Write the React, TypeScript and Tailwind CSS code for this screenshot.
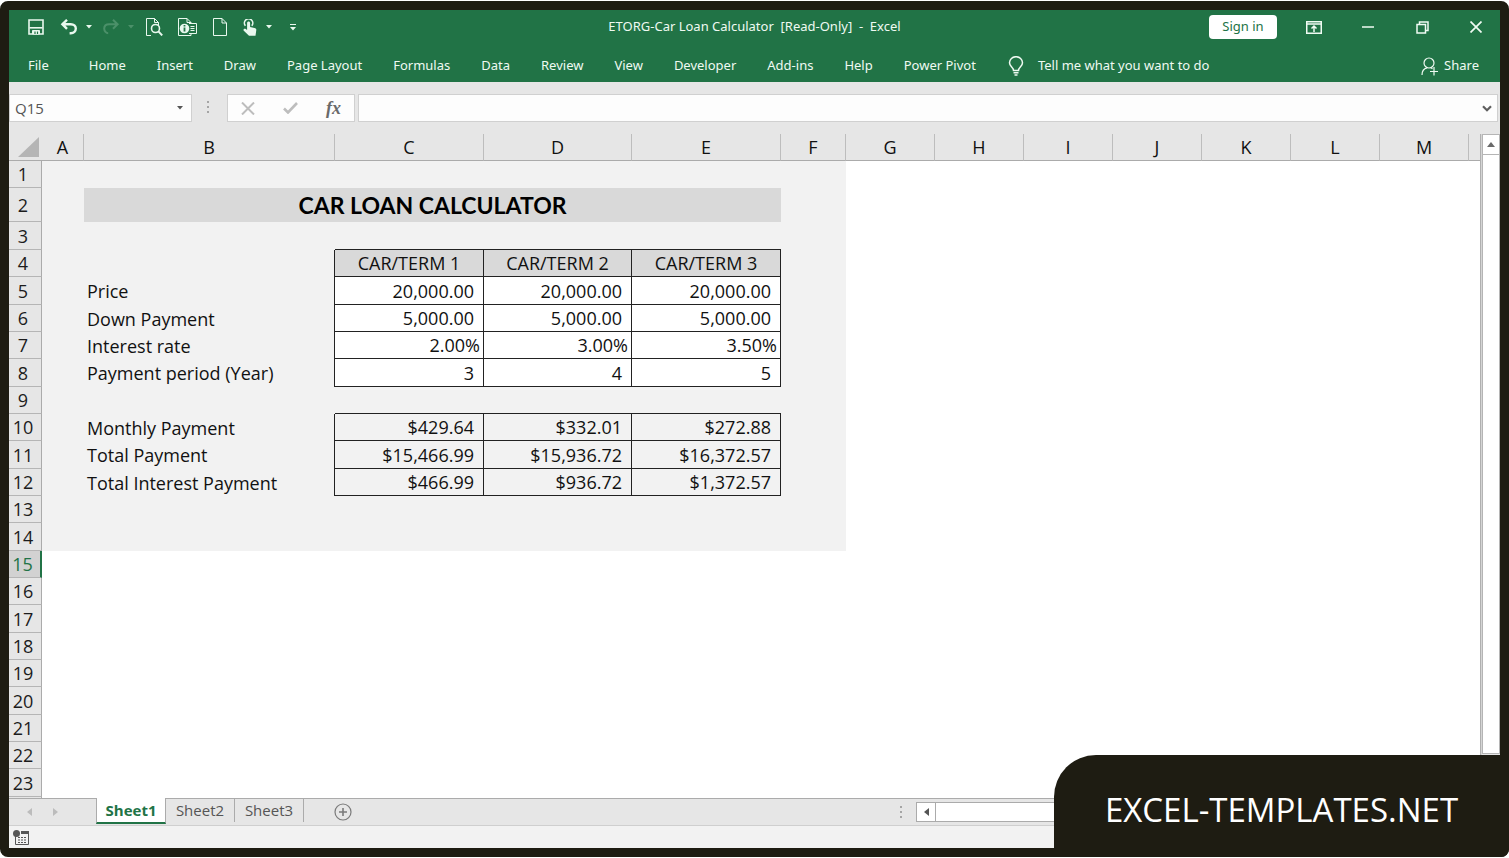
import { useState } from "react";
import type { ReactNode } from "react";

const tabs = ["Home", "Insert", "Draw", "Page Layout", "Formulas", "Data", "Review", "View", "Developer", "Add-ins", "Help", "Power Pivot"];

const columns = ["A", "B", "C", "D", "E", "F", "G", "H", "I", "J", "K", "L", "M"];

const columnWidths = [
  "w-[42px]", "w-[251px]", "w-[149px]", "w-[148px]", "w-[149px]", "w-[65px]",
  "w-[89px]", "w-[89px]", "w-[89px]", "w-[89px]", "w-[89px]", "w-[89px]", "w-[89px]",
];

type LoanRow = { label: string; values: string[]; kind: "head" | "input" | "percent" | "result" };

const loanRows: Record<number, LoanRow> = {
  4: { label: "", values: ["CAR/TERM 1", "CAR/TERM 2", "CAR/TERM 3"], kind: "head" },
  5: { label: "Price", values: ["20,000.00", "20,000.00", "20,000.00"], kind: "input" },
  6: { label: "Down Payment", values: ["5,000.00", "5,000.00", "5,000.00"], kind: "input" },
  7: { label: "Interest rate", values: ["2.00%", "3.00%", "3.50%"], kind: "percent" },
  8: { label: "Payment period (Year)", values: ["3", "4", "5"], kind: "input" },
  10: { label: "Monthly Payment", values: ["$429.64", "$332.01", "$272.88"], kind: "result" },
  11: { label: "Total Payment", values: ["$15,466.99", "$15,936.72", "$16,372.57"], kind: "result" },
  12: { label: "Total Interest Payment", values: ["$466.99", "$936.72", "$1,372.57"], kind: "result" },
};

const kindClass = {
  head: "bg-[#d9d9d9] text-center",
  input: "bg-white text-right pr-[9px]",
  percent: "bg-white text-right pr-[3px]",
  result: "bg-[#f2f2f2] text-right pr-[9px]",
};

function Caret() {
  return (
    <svg width="6" height="4" viewBox="0 0 6 4" fill="currentColor">
      <path d="M0 0h6L3 3.5z" />
    </svg>
  );
}

function IconButton({ label, children, className = "" }: { label: string; children: ReactNode; className?: string }) {
  return (
    <button aria-label={label} title={label} className={`flex shrink-0 items-center justify-center ${className}`}>
      {children}
    </button>
  );
}

function QuickAccess() {
  return (
    <div className="flex items-center pl-[19px] text-[#e9f8ee]">
      <IconButton label="Save" className="w-4">
        <svg width="16" height="16" viewBox="0 0 16 16" fill="none" stroke="currentColor" strokeWidth="1.6">
          <path d="M1 1h14v14H1z" />
          <path d="M1.5 8.800h13" />
          <path d="M4.500 15v-3.500h7V15z" fill="currentColor" strokeWidth="1" />
          <path d="M7 12.500v2.500M9.500 12.500v2.500" stroke="#217346" strokeWidth="1.200" />
        </svg>
      </IconButton>
      <IconButton label="Undo" className="ml-4 w-[18px]">
        <svg width="18" height="16" viewBox="0 0 18 16" fill="none" stroke="currentColor" strokeWidth="2.4">
          <path d="M7 0.8L2.4 5.2 7 9.8M2.6 5.2h8.2c3 0 5 1.8 5 4.4s-2 4.6-5 4.6H9.6" />
        </svg>
      </IconButton>
      <IconButton label="Undo list" className="ml-[7px] w-2"><Caret /></IconButton>
      <IconButton label="Redo" className="ml-[9px] w-[18px] text-[#4b9069]">
        <svg width="18" height="16" viewBox="0 0 18 16" fill="none" stroke="currentColor" strokeWidth="2">
          <path d="M11 0.8l4.6 4.4L11 9.8M15.4 5.2H7.2c-3 0-5 1.8-5 4.4s2 4.6 4 4.6" />
        </svg>
      </IconButton>
      <IconButton label="Redo list" className="ml-[7px] w-2 text-[#4b9069]"><Caret /></IconButton>
      <IconButton label="Print preview" className="ml-[10px] w-[18px]">
        <svg width="18" height="18" viewBox="0 0 18 18" fill="none" stroke="currentColor">
          <path d="M6 17.5H1.5v-17h8l4 4V7M9.5 0.5v4h4" />
          <circle cx="10.5" cy="10.5" r="4" strokeWidth="1.6" />
          <path d="M13.4 13.4l3.8 4" strokeWidth="2" />
        </svg>
      </IconButton>
      <IconButton label="Document info" className="ml-[14px] w-5">
        <svg width="20" height="18" viewBox="0 0 20 18" fill="none" stroke="currentColor">
          <path d="M14 5.5v-1l-4-4H1.5v17H14v-2M10 0.5v4h4M12 5.5h7.5v10H12" />
          <circle cx="7.5" cy="10.5" r="4.8" fill="currentColor" stroke="none" />
          <path d="M7.5 7v1.6M7.5 9.6v4" stroke="#217346" strokeWidth="1.8" />
          <path d="M13.5 8.5h4M13.5 10.5h4M13.5 12.5h4" />
        </svg>
      </IconButton>
      <IconButton label="New" className="ml-4 w-[14px]">
        <svg width="14" height="18" viewBox="0 0 14 18" fill="none" stroke="currentColor">
          <path d="M0.5 0.5h8.5l4.5 4.5v12.5H0.5zM9 0.5V5h4.5" />
        </svg>
      </IconButton>
      <IconButton label="Touch/Mouse mode" className="ml-4 w-[14px]">
        <svg width="14" height="17" viewBox="0 0 14 17" fill="currentColor">
          <path d="M4.1 4c0-2 3-2 3 0v4l4.400.9c1.400.3 2 1 1.800 2.200L12.500 16.800H6L.8 11.800c-1-1.400.7-2.800 2-1.700l1.300 1z" />
          <path d="M2.400 6.800a4.200 4.200 0 1 1 6.400 0" fill="none" stroke="currentColor" strokeWidth="1.600" />
        </svg>
      </IconButton>
      <IconButton label="Input mode list" className="ml-2 w-2"><Caret /></IconButton>
      <IconButton label="Customize" className="ml-4 w-2">
        <svg width="6" height="7" viewBox="0 0 6 7" fill="currentColor">
          <path d="M0 0h6v1H0zM0 3h6L3 6.500z" />
        </svg>
      </IconButton>
    </div>
  );
}

function WindowButtons() {
  return (
    <div className="flex items-center justify-end pr-4 text-[#f0fbf3]">
      <button className="mr-[29px] h-6 w-[68px] rounded-sm bg-white text-[#217346]">Sign in</button>
      <div className="flex items-center gap-[38px]">
        <IconButton label="Ribbon display options" className="w-4">
          <svg width="16" height="13" viewBox="0 0 16 13" fill="none" stroke="currentColor" strokeWidth="1.5">
            <path d="M.75.750h14.500v11.500H.750zM1 3h14M8 11V5.500M5.500 7.500L8 5l2.500 2.500" />
          </svg>
        </IconButton>
        <IconButton label="Minimize" className="w-4">
          <svg width="12" height="2" viewBox="0 0 12 2"><path d="M0 1h12" stroke="currentColor" strokeWidth="1.5" /></svg>
        </IconButton>
        <IconButton label="Restore" className="w-4">
          <svg width="13" height="13" viewBox="0 0 13 13" fill="none" stroke="currentColor" strokeWidth="1.5">
            <path d="M1 3.500h8.500V12H1zM3.500 3V1H12v8.500H10" />
          </svg>
        </IconButton>
        <IconButton label="Close" className="w-4">
          <svg width="12" height="12" viewBox="0 0 12 12" stroke="currentColor" strokeWidth="1.7">
            <path d="M.5.500l11 11M11.500.500l-11 11" />
          </svg>
        </IconButton>
      </div>
    </div>
  );
}

function Ribbon() {
  return (
    <header className="shrink-0 bg-[#217346] font-['Noto_Sans'] text-[13px] text-[#effaf2]">
      <div className="grid h-[34px] grid-cols-[1fr_auto_1fr] items-center">
        <QuickAccess />
        <h1 className="whitespace-pre">ETORG-Car Loan Calculator  [Read-Only]  -  Excel</h1>
        <WindowButtons />
      </div>
      <nav className="flex h-[38px] items-center whitespace-nowrap pl-[19px] pt-[6px]">
        <button className="mr-10">File</button>
        <div className="flex gap-[31px]">
          {tabs.map((tab) => (
            <button key={tab}>{tab}</button>
          ))}
        </div>
        <button className="ml-8 flex items-center gap-[14px]">
          <svg width="16" height="20" viewBox="0 0 16 20" fill="none" stroke="currentColor" strokeWidth="1.5">
            <path d="M5.500 14.500c0-3-4-4-4-7.800a6.500 6 0 0 1 13 0c0 3.800-4 4.800-4 7.800zM5.500 16.800h5M6.500 19h3" />
          </svg>
          Tell me what you want to do
        </button>
        <button className="ml-auto mr-[21px] flex items-center gap-[6px]">
          <svg width="17" height="19" viewBox="0 0 17 19" fill="none" stroke="currentColor" strokeWidth="1.2">
            <circle cx="8" cy="6" r="5" />
            <path d="M1 18c0-4 2-6.500 5-7.200M10 10.800l1.500 1M13 10v8.500M9 14.500h8" />
          </svg>
          Share
        </button>
      </nav>
    </header>
  );
}

function FormulaBar() {
  return (
    <div className="flex h-[52px] shrink-0 items-center pr-[2px]">
      <div className="flex h-7 w-[183px] items-center border border-[#d0d0d0] bg-[#fdfdfd] pr-2 text-[#555]">
        <input aria-label="Name box" defaultValue="Q15" className="w-full min-w-0 bg-transparent pl-[5px] text-[15px] outline-none" />
        <IconButton label="Open name list"><Caret /></IconButton>
      </div>
      <svg width="3" height="14" viewBox="0 0 3 14" fill="#a5a5a5" className="mx-[15px]">
        <path d="M0 0h2v2H0zM0 5h2v2H0zM0 10h2v2H0z" />
      </svg>
      <div className="ml-[2px] flex h-7 w-[128px] shrink-0 items-center justify-between border border-[#d0d0d0] bg-[#fdfdfd] px-[13px]">
        <IconButton label="Cancel">
          <svg width="14" height="13" viewBox="0 0 14 13" stroke="#bdbdbd" strokeWidth="2"><path d="M1 .500l12 12M13 .500l-12 12" /></svg>
        </IconButton>
        <IconButton label="Enter">
          <svg width="15" height="12" viewBox="0 0 15 12" fill="none" stroke="#bdbdbd" strokeWidth="2.6"><path d="M1 6.500l4 4L14 1" /></svg>
        </IconButton>
        <button aria-label="Insert function" className="font-['Liberation_Serif'] text-lg leading-5 font-bold text-[#6a6a6a] italic">fx</button>
      </div>
      <div className="ml-[3px] flex h-7 flex-1 items-center border border-[#d0d0d0] bg-[#fdfdfd] pr-[5px]">
        <input aria-label="Formula" className="h-full w-full bg-transparent px-2 outline-none" />
        <IconButton label="Expand formula bar">
          <svg width="10" height="7" viewBox="0 0 10 7" fill="none" stroke="#5f5f5f" strokeWidth="2.2"><path d="M1 1.200l4 4 4-4" /></svg>
        </IconButton>
      </div>
    </div>
  );
}

function SheetRow({ n }: { n: number }) {
  const row = loanRows[n];
  const height = n === 2 ? "h-[34px]" : n === 3 || n % 3 === 2 ? "h-7" : "h-[27px]";
  const fill = n <= 14 ? "bg-[#f2f2f2]" : "bg-white";
  // cells above a table draw its top line
  const line = row || loanRows[n + 1] ? "border-b border-[#222]" : "";

  return (
    <tr className={height}>
      <th
        scope="row"
        className={`border-b border-r border-b-[#b5b5b5] pr-1 text-center font-normal ${
          n === 15 ? "border-r-2 border-r-[#217346] bg-[#d2d2d2] text-[#217346]" : "border-r-[#ababab] text-[#1c1c1c]"
        }`}
      >
        {n}
      </th>
      <td className={fill}></td>
      {n === 2 ? (
        <td colSpan={4} className="bg-[#d9d9d9] text-center font-['Lato'] text-[23px] font-bold text-black">
          CAR LOAN CALCULATOR
        </td>
      ) : (
        <>
          <td className={`${fill} pl-[3px] ${row ? "border-r border-[#222]" : ""}`}>{row?.label}</td>
          {[0, 1, 2].map((i) => (
            <td key={i} className={`${line} ${row ? `border-r ${kindClass[row.kind]}` : fill}`}>
              {row?.values[i]}
            </td>
          ))}
        </>
      )}
      <td className={fill}></td>
      <td colSpan={8} className="bg-white"></td>
    </tr>
  );
}

function Sheet() {
  return (
    <div className="flex min-h-0 flex-1">
      <div className="flex-1 overflow-hidden border-r border-[#b0b0b0]">
        <table className="w-full table-fixed border-separate border-spacing-0 text-lg leading-6 whitespace-nowrap text-[#111]">
          <colgroup>
            <col className="w-[33px]" />
            {columnWidths.map((w, i) => (
              <col key={i} className={w} />
            ))}
            <col />
          </colgroup>
          <thead>
            <tr className="h-[27px]">
              <th className="border-b border-[#ababab] p-0">
                <button aria-label="Select all" className="flex w-full justify-end pr-[3px]">
                  <svg width="21" height="20" viewBox="0 0 21 20" fill="#b5b5b5"><path d="M21 0v20H0z" /></svg>
                </button>
              </th>
              {columns.map((c) => (
                <th key={c} scope="col" className="border-b border-r border-b-[#ababab] border-r-[#bdbdbd] font-normal">
                  {c}
                </th>
              ))}
              <th className="border-b border-[#ababab]"></th>
            </tr>
          </thead>
          <tbody>
            {Array.from({ length: 23 }, (_, i) => (
              <SheetRow key={i} n={i + 1} />
            ))}
            <tr className="h-[27px]">
              <th className="border-r border-[#ababab]"></th>
              <td colSpan={14} className="bg-white"></td>
            </tr>
          </tbody>
        </table>
      </div>
      <div className="flex w-[19px] flex-col border-l border-[#d5d5d5] pb-11">
        <button aria-label="Scroll up" className="flex h-[21px] shrink-0 items-center justify-center border border-[#b5b5b5] bg-white">
          <svg width="8" height="5" viewBox="0 0 8 5" fill="#6a6a6a"><path d="M4 0l4 5H0z" /></svg>
        </button>
        <div className="flex-1 border border-t-0 border-[#b5b5b5] bg-white"></div>
      </div>
    </div>
  );
}

function SheetTabs() {
  const [active, setActive] = useState("Sheet1");

  return (
    <div className="flex h-7 shrink-0 items-start border-b border-[#cfcfcf] text-[15px] text-[#555]">
      <div className="flex h-full w-[87px] items-center gap-[21px] border-t border-[#ababab] pl-[18px] text-[#bcbcbc]">
        <IconButton label="Previous sheet">
          <svg width="5" height="8" viewBox="0 0 5 8" fill="currentColor"><path d="M5 0v8L0 4z" /></svg>
        </IconButton>
        <IconButton label="Next sheet">
          <svg width="5" height="8" viewBox="0 0 5 8" fill="currentColor"><path d="M0 0v8l5-4z" /></svg>
        </IconButton>
      </div>
      {["Sheet1", "Sheet2", "Sheet3"].map((name) => (
        <button
          key={name}
          onClick={() => setActive(name)}
          className={
            name === active
              ? "h-[26px] w-[70px] border-x border-b-2 border-x-[#ababab] border-b-[#217346] bg-white font-bold text-[#217346]"
              : "h-6 w-[69px] border-r border-t border-r-[#ababab] border-t-[#ababab]"
          }
        >
          {name}
        </button>
      ))}
      <div className="flex h-full flex-1 items-center border-t border-[#ababab] pl-[30px]">
        <IconButton label="New sheet">
          <svg width="18" height="18" viewBox="0 0 18 18" fill="none" stroke="#7a7a7a" strokeWidth="1.2">
            <circle cx="9" cy="9" r="8" />
            <path d="M9 5v8M5 9h8" strokeWidth="1.6" />
          </svg>
        </IconButton>
      </div>
      <div className="flex h-full w-[600px] items-center border-t border-[#ababab]">
        <svg width="2" height="12" viewBox="0 0 2 12" fill="#a5a5a5" className="mr-[14px]">
          <path d="M0 0h2v2H0zM0 5h2v2H0zM0 10h2v2H0z" />
        </svg>
        <button aria-label="Scroll left" className="flex h-5 w-5 items-center justify-center border border-[#ababab] bg-white">
          <svg width="5" height="8" viewBox="0 0 5 8" fill="#555"><path d="M5 0v8L0 4z" /></svg>
        </button>
        <div className="h-5 flex-1 border border-l-0 border-[#ababab] bg-white"></div>
      </div>
    </div>
  );
}

export default function App() {
  return (
    <div className="relative h-screen bg-white py-px font-['Open_Sans',sans-serif]">
      <div className="flex h-full flex-col overflow-hidden rounded-lg border-[9px] border-[#1e1c12] bg-[#e6e6e6]">
        <Ribbon />
        <FormulaBar />
        <Sheet />
        <SheetTabs />

        {/* Status bar */}
        <footer className="flex h-[22px] shrink-0 items-center bg-[#f2f2f2] pl-1">
          <IconButton label="Record macro">
            <svg width="16" height="15" viewBox="0 0 16 15" fill="none" stroke="#555">
              <path d="M2.5 6v8.500h13V3" />
              <path d="M8 1h8v3H8z" fill="#555" stroke="none" />
              <circle cx="3.5" cy="3.5" r="3.5" fill="#555" stroke="none" />
              <path d="M5 7.500h9M5 10h9M5 12.500h9" strokeDasharray="2 1" />
            </svg>
          </IconButton>
        </footer>
      </div>

      {/* Site badge over the corner */}
      <div className="absolute right-0 bottom-px flex h-[102px] w-[455px] items-center justify-center rounded-tl-[42px] rounded-br-lg bg-[#1e1c12] pt-2 text-[33px] text-white">
        EXCEL-TEMPLATES.NET
      </div>
    </div>
  );
}
